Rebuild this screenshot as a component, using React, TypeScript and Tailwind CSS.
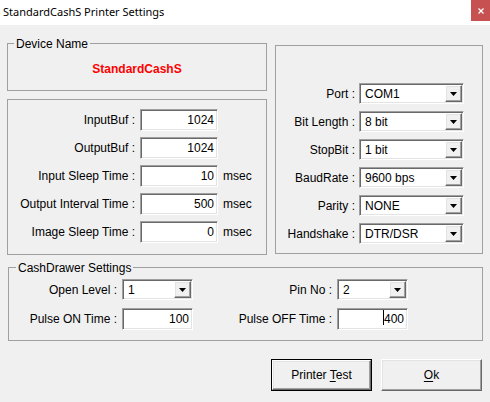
import React from "react";

const SUNKEN =
  "border border-t-[#a0a0a0] border-l-[#a0a0a0] border-b-white border-r-white shadow-[inset_1px_1px_0_#696969,inset_-1px_-1px_0_#e3e3e3]";
const RAISED =
  "border border-t-white border-l-white border-r-[#696969] border-b-[#696969] shadow-[inset_-1px_-1px_0_#a0a0a0,inset_1px_1px_0_#e3e3e3]";

function TextBox({ value, className, cursor }: { value: string; className: string; cursor?: boolean }) {
  return (
    <div className={`${SUNKEN} ${className} bg-white box-border flex items-center justify-end pr-[3px]`}>
      {cursor && <span className="w-[1px] h-[15px] bg-black self-start mt-[1px]" />}
      <span>{value}</span>
    </div>
  );
}

function Combo({ value, className }: { value: string; className: string }) {
  return (
    <div className={`${SUNKEN} ${className} bg-white box-border p-[1px] flex`}>
      <div className="flex-1 flex items-center pl-[4px]">{value}</div>
      <div className={`${RAISED} bg-[#f0f0f0] w-[17px] flex items-center justify-center`}>
        <svg width="7" height="4" viewBox="0 0 7 4">
          <path d="M0 0H7L3.5 4Z" fill="black" />
        </svg>
      </div>
    </div>
  );
}

const bufRows: { label: string; value: string; unit?: boolean }[] = [
  { label: "InputBuf :", value: "1024" },
  { label: "OutputBuf :", value: "1024" },
  { label: "Input Sleep Time :", value: "10", unit: true },
  { label: "Output Interval Time :", value: "500", unit: true },
  { label: "Image Sleep Time :", value: "0", unit: true },
];

const portRows: { label: string; value: string }[] = [
  { label: "Port :", value: "COM1" },
  { label: "Bit Length :", value: "8 bit" },
  { label: "StopBit :", value: "1 bit" },
  { label: "BaudRate :", value: "9600 bps" },
  { label: "Parity :", value: "NONE" },
  { label: "Handshake :", value: "DTR/DSR" },
];

export default function App() {
  return (
    <div className="w-[490px] h-[402px] bg-[#f0f0f0] overflow-hidden flex flex-col font-['Liberation_Sans',Arial,sans-serif] text-[12px] leading-[14px] text-black">
      {/* Title bar */}
      <div className="h-[25px] bg-white flex items-start justify-between shrink-0">
        <div className="pl-[3px] pt-[4px] font-['Noto_Sans',sans-serif] text-[11px] leading-[16px]">
          StandardCashS Printer Settings
        </div>
        <div className="w-[19px] h-[21px] bg-[#c75050] flex items-center justify-center">
          <svg width="6" height="6" viewBox="0 0 6 6">
            <path d="M0.5 0.5L5.5 5.5M5.5 0.5L0.5 5.5" stroke="white" strokeWidth="1.3" />
          </svg>
        </div>
      </div>

      {/* Top section */}
      <div className="flex items-start pl-[7px] gap-[8px]">
        {/* Left column */}
        <div className="w-[260px] flex flex-col mt-[18px]">
          <div className="h-[48px] border border-[#a0a0a0] flex flex-col box-border">
            <span className="self-start -mt-[7px] ml-[6px] px-[2px] bg-[#f0f0f0]">Device Name</span>
            <div className="mt-[11px] text-center font-bold text-[#ff0000]">StandardCashS</div>
          </div>
          <div className="mt-[8px] h-[156px] border border-[#a0a0a0] box-border pt-[9px] flex flex-col gap-[6px]">
            {bufRows.map((r) => (
              <div key={r.label} className="h-[22px] flex items-center">
                <span className="w-[127px] text-right">{r.label}</span>
                <TextBox value={r.value} className="ml-[5px] w-[78px] h-[22px]" />
                {r.unit && <span className="ml-[5px]">msec</span>}
              </div>
            ))}
          </div>
        </div>

        {/* Right group */}
        <div className="mt-[20px] w-[208px] h-[209px] border border-[#a0a0a0] box-border pt-[37px] flex flex-col gap-[7px]">
          {portRows.map((r) => (
            <div key={r.label} className="h-[21px] flex items-center">
              <span className="w-[79px] text-right">{r.label}</span>
              <Combo value={r.value} className="ml-[4px] w-[105px] h-[21px]" />
            </div>
          ))}
        </div>
      </div>

      {/* CashDrawer Settings */}
      <div className="mt-[12px] ml-[8px] w-[475px] h-[74px] border border-[#a0a0a0] box-border flex flex-col">
        <span className="self-start -mt-[7px] ml-[7px] px-[2px] bg-[#f0f0f0]">CashDrawer Settings</span>
        <div className="mt-[4px] grid grid-cols-[108px_71px_134px_71px] gap-x-[5px] gap-y-[8px] items-center">
          <span className="text-right">Open Level :</span>
          <Combo value="1" className="w-[71px] h-[21px]" />
          <span className="text-right">Pin No :</span>
          <Combo value="2" className="w-[71px] h-[21px]" />
          <span className="text-right">Pulse ON Time :</span>
          <TextBox value="100" className="w-[71px] h-[22px]" />
          <span className="text-right">Pulse OFF Time :</span>
          <TextBox value="400" cursor className="w-[71px] h-[22px]" />
        </div>
      </div>

      {/* Buttons */}
      <div className="mt-[18px] flex justify-end pr-[8px] gap-[9px]">
        <div className="w-[101px] h-[32px] border border-black box-border bg-[#f0f0f0]">
          <div className={`${RAISED} w-full h-full box-border flex items-center justify-center`}>
            <span>
              Printer <span className="underline underline-offset-2">T</span>est
            </span>
          </div>
        </div>
        <div className={`${RAISED} w-[101px] h-[32px] box-border bg-[#f0f0f0] flex items-center justify-center`}>
          <span>
            <span className="underline underline-offset-2">O</span>k
          </span>
        </div>
      </div>
    </div>
  );
}
